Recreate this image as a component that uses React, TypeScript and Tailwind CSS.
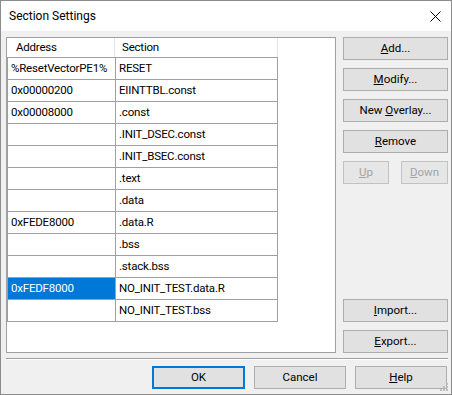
import React from 'react';

const ROWS: { addr: string; section: string; selected?: boolean }[] = [
  { addr: '%ResetVectorPE1%', section: 'RESET' },
  { addr: '0x00000200', section: 'EIINTTBL.const' },
  { addr: '0x00008000', section: '.const' },
  { addr: '', section: '.INIT_DSEC.const' },
  { addr: '', section: '.INIT_BSEC.const' },
  { addr: '', section: '.text' },
  { addr: '', section: '.data' },
  { addr: '0xFEDE8000', section: '.data.R' },
  { addr: '', section: '.bss' },
  { addr: '', section: '.stack.bss' },
  { addr: '0xFEDF8000', section: 'NO_INIT_TEST.data.R', selected: true },
  { addr: '', section: 'NO_INIT_TEST.bss' },
];

interface BtnProps {
  pre?: string;
  u?: string;
  post?: string;
  disabled?: boolean;
  isDefault?: boolean;
  className?: string;
}

function Btn({ pre = '', u = '', post = '', disabled, isDefault, className = '' }: BtnProps) {
  const look = disabled
    ? 'bg-[#e6e6e6] border border-[#c2c2c2] text-[#a3a3a3]'
    : isDefault
      ? 'bg-[#e1e1e1] border-2 border-[#0078d7] text-black'
      : 'bg-[#e1e1e1] border border-[#adadad] text-black';
  return (
    <div className={`h-[23px] flex items-center justify-center text-[11.5px] leading-none ${look} ${className}`}>
      <span>
        {pre}
        {u && <span className="underline underline-offset-[1px]">{u}</span>}
        {post}
      </span>
    </div>
  );
}

export default function App() {
  return (
    <div
      className="relative w-[452px] h-[395px] border border-[#8c8c8c] bg-[#f0f0f0] flex flex-col text-black"
      style={{ fontFamily: 'Roboto, "Liberation Sans", sans-serif' }}
    >
      {/* Title bar */}
      <div className="h-[30px] bg-white flex items-center justify-between pl-[8px] pr-[10px] shrink-0">
        <span className="text-[12px]">Section Settings</span>
        <svg width="11" height="11" viewBox="0 0 11 11">
          <path d="M0.5 0.5 L10.5 10.5 M10.5 0.5 L0.5 10.5" stroke="#000" strokeWidth="1" />
        </svg>
      </div>

      {/* Body */}
      <div className="flex gap-[7px] pl-[5px] pt-[6px] pr-[3px]">
        {/* List view */}
        <div className="w-[330px] h-[316px] bg-white border border-[#a0a0a0] text-[11.5px] tracking-[-0.2px]">
          <div className="h-[19px] flex items-center">
            <div className="w-[108px] h-full border-r border-[#e5e5e5] pl-[9px] flex items-center">Address</div>
            <div className="w-[163px] h-full border-r border-[#e5e5e5] pl-[7px] flex items-center">Section</div>
          </div>
          <div className="w-[271px] border-t border-l border-[#a0a0a0]">
            {ROWS.map((r, i) => (
              <div key={i} className="flex h-[22px] border-b border-[#a0a0a0]">
                <div
                  className={`w-[108px] border-r border-[#a0a0a0] pl-[3px] flex items-center whitespace-nowrap overflow-hidden ${
                    r.selected ? 'bg-[#0078d7] text-white' : ''
                  }`}
                >
                  {r.addr}
                </div>
                <div className="w-[162px] border-r border-[#a0a0a0] pl-[3px] flex items-center whitespace-nowrap">
                  {r.section}
                </div>
              </div>
            ))}
          </div>
        </div>

        {/* Right buttons */}
        <div className="w-[105px] h-[316px] flex flex-col justify-between">
          <div className="flex flex-col gap-[8px]">
            <Btn u="A" post="dd..." />
            <Btn u="M" post="odify..." />
            <Btn pre="New " u="O" post="verlay..." />
            <Btn u="R" post="emove" />
            <div className="flex gap-[12px]">
              <Btn u="U" post="p" disabled className="w-[46px]" />
              <Btn u="D" post="own" disabled className="w-[47px]" />
            </div>
          </div>
          <div className="flex flex-col gap-[8px]">
            <Btn u="I" post="mport..." />
            <Btn u="E" post="xport..." />
          </div>
        </div>
      </div>

      {/* Separator */}
      <div className="ml-[5px] mr-[3px] mt-[5px] h-[2px] border-t border-[#a0a0a0] border-b border-b-white" />

      {/* Footer */}
      <div className="flex justify-end gap-[9px] pr-[4px] pt-[6px]">
        <Btn pre="OK" isDefault className="w-[93px]" />
        <Btn pre="Cancel" className="w-[92px]" />
        <Btn u="H" post="elp" className="w-[92px]" />
      </div>

      {/* Size grip */}
      <svg width="8" height="8" viewBox="0 0 8 8" className="absolute right-[3px] bottom-[3px]">
        <rect x="6" y="0" width="2" height="2" fill="#bdbdbd" />
        <rect x="3" y="3" width="2" height="2" fill="#bdbdbd" />
        <rect x="6" y="3" width="2" height="2" fill="#bdbdbd" />
        <rect x="0" y="6" width="2" height="2" fill="#bdbdbd" />
        <rect x="3" y="6" width="2" height="2" fill="#bdbdbd" />
        <rect x="6" y="6" width="2" height="2" fill="#bdbdbd" />
      </svg>
    </div>
  );
}
